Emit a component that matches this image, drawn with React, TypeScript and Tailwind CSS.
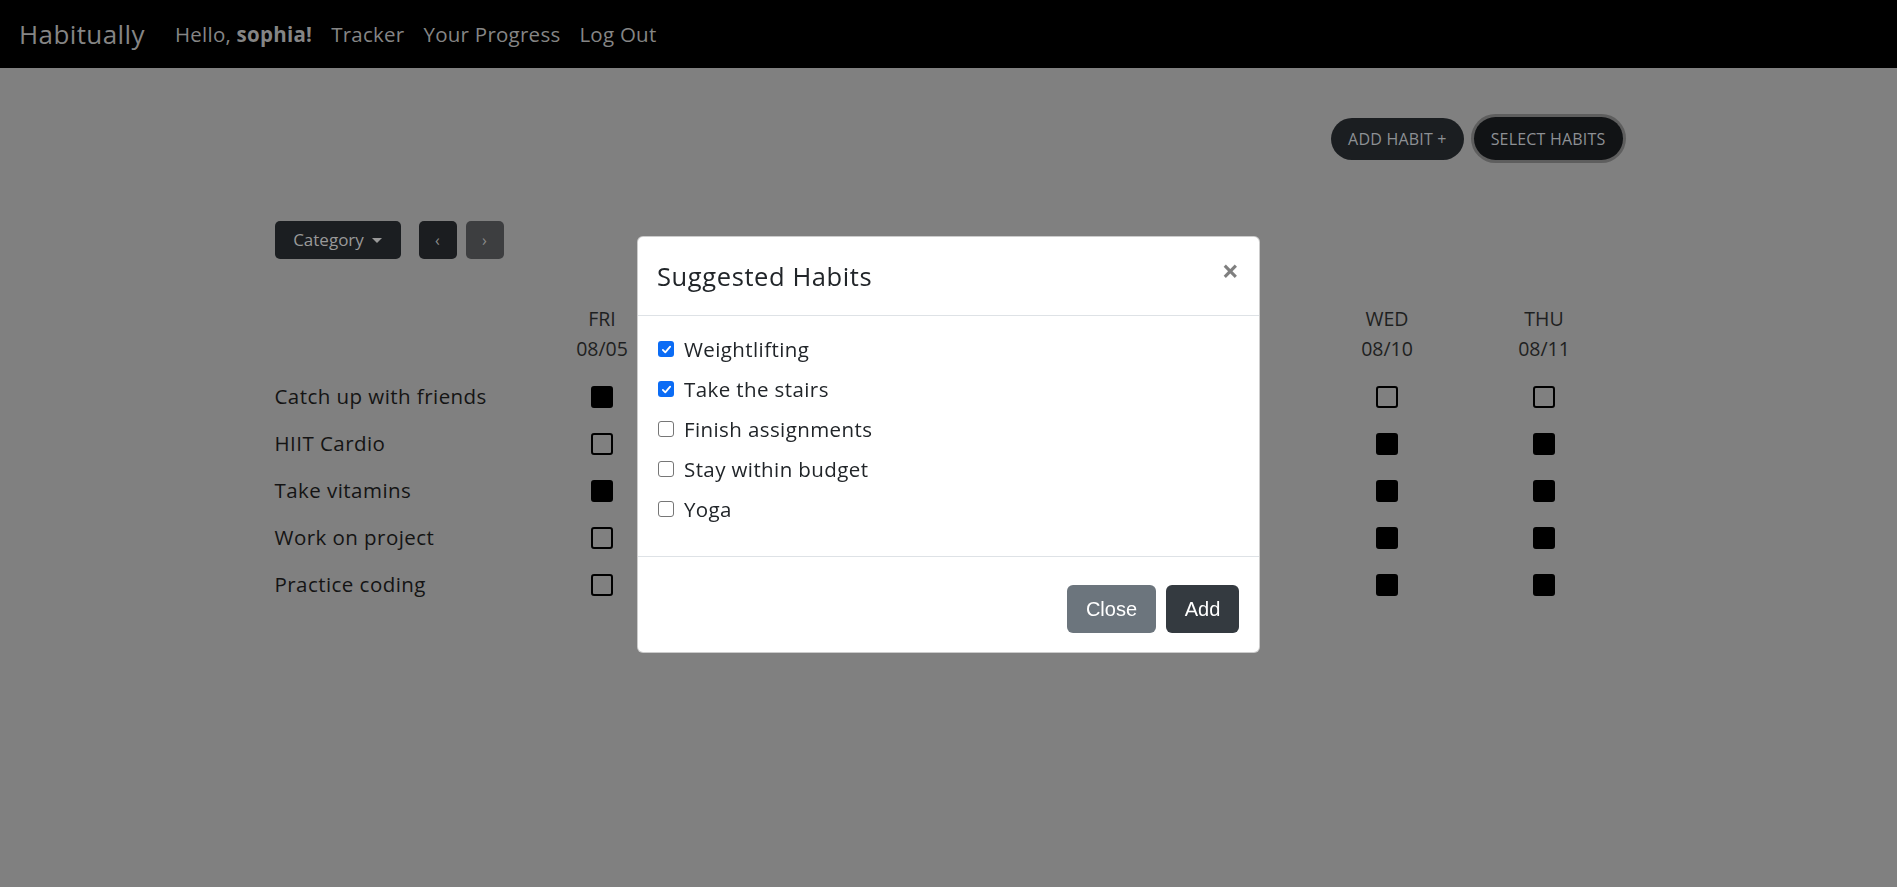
import React from "react";

const FONT = "font-['Open_Sans',sans-serif]";

const days = [
  { day: "FRI", date: "08/05" },
  { day: "SAT", date: "08/06" },
  { day: "SUN", date: "08/07" },
  { day: "MON", date: "08/08" },
  { day: "TUE", date: "08/09" },
  { day: "WED", date: "08/10" },
  { day: "THU", date: "08/11" },
];

const habits = [
  { name: "Catch up with friends", done: [1, 0, 1, 0, 1, 0, 0] },
  { name: "HIIT Cardio", done: [0, 1, 1, 0, 1, 1, 1] },
  { name: "Take vitamins", done: [1, 1, 1, 1, 1, 1, 1] },
  { name: "Work on project", done: [0, 1, 0, 1, 1, 1, 1] },
  { name: "Practice coding", done: [0, 0, 1, 1, 1, 1, 1] },
];

const suggestions = [
  { name: "Weightlifting", checked: true },
  { name: "Take the stairs", checked: true },
  { name: "Finish assignments", checked: false },
  { name: "Stay within budget", checked: false },
  { name: "Yoga", checked: false },
];

const Box = ({ filled }: { filled: boolean }) => (
  <div
    className={`size-[22px] rounded-[3px] border-2 border-black ${filled ? "bg-black" : ""}`}
  />
);

const Check = ({ checked }: { checked: boolean }) =>
  checked ? (
    <div className="size-[16px] shrink-0 rounded-[3px] bg-[#0b6cf5] flex items-center justify-center">
      <svg viewBox="0 0 16 16" className="size-[13px]" fill="none">
        <path d="M3.5 8.5l3 3 6-7" stroke="white" strokeWidth="2.2" strokeLinecap="round" strokeLinejoin="round" />
      </svg>
    </div>
  ) : (
    <div className="size-[16px] shrink-0 rounded-[3px] border border-[#767676] bg-white" />
  );

export default function App() {
  return (
    <div className={`min-h-[887px] bg-[#808080] ${FONT}`}>
      {/* navbar */}
      <nav className="h-[68px] bg-black flex items-center px-[19px] text-[#858585]">
        <span className="text-[26px] tracking-[0.4px] mr-[30px]">Habitually</span>
        <div className="flex items-center gap-[19px] text-[20.5px] tracking-[0.25px]">
          <span>
            Hello, <b className="font-bold">sophia!</b>
          </span>
          <span>Tracker</span>
          <span>Your Progress</span>
          <span>Log Out</span>
        </div>
      </nav>

      <main className="w-[1348px] mx-auto">
        <div className="flex justify-end items-center gap-[10px] pt-[49px]">
          <button className="h-[42px] px-[17px] rounded-full bg-[#1b1e21] text-[#8d9094] text-[16px] tracking-[0.2px]">
            ADD HABIT +
          </button>
          <button className="h-[43px] px-[17px] rounded-full bg-[#111315] text-[#8d9094] text-[16px] tracking-[0.2px] ring-[3px] ring-[#5e5e5e]">
            SELECT HABITS
          </button>
        </div>

        <div className="flex items-center gap-[18px] mt-[61px]">
          <button className="h-[38px] w-[126px] rounded-[5px] bg-[#1b1e21] text-[#999] text-[17px] flex items-center justify-center gap-[8px]">
            Category
            <span className="border-x-[5px] border-x-transparent border-t-[5px] border-t-[#999]" />
          </button>
          <div className="flex gap-[9px]">
            <button className="h-[38px] w-[38px] rounded-[5px] bg-[#1b1d20] text-[#8a8a8a] text-[16px]">‹</button>
            <button className="h-[38px] w-[38px] rounded-[5px] bg-[#3d3e40] text-[#8a8a8a] text-[16px]">›</button>
          </div>
        </div>

        {/* tracker table */}
        <div className="mt-[45px] grid grid-cols-[249px_repeat(7,157px)]">
          <div />
          {days.map((d) => (
            <div key={d.day} className="text-center text-[#1e1f21] text-[19.5px] leading-[30px]">
              <div>{d.day}</div>
              <div>{d.date}</div>
            </div>
          ))}
        </div>
        <div className="mt-[9px]">
          {habits.map((h) => (
            <div key={h.name} className="grid grid-cols-[249px_repeat(7,157px)] h-[47px] items-center">
              <span className="text-[20.5px] tracking-[0.45px] text-[#141414]">{h.name}</span>
              {h.done.map((v, i) => (
                <div key={i} className="flex justify-center">
                  <Box filled={v === 1} />
                </div>
              ))}
            </div>
          ))}
        </div>
      </main>

      {/* modal */}
      <div className="fixed inset-0 flex items-start justify-center pt-[236px]">
        <div className="w-[623px] h-[417px] bg-white rounded-[6px] border border-black/20 flex flex-col">
          <div className="h-[79px] shrink-0 border-b border-[#dee2e6] flex items-center justify-between pl-[19px] pr-[20px]">
            <h5 className="text-[25.5px] tracking-[0.6px] text-[#212529]">Suggested Habits</h5>
            <span className="text-[30px] font-bold text-black/50 leading-none -mt-[10px]">×</span>
          </div>
          <div className="pt-[13px] pb-[27px] px-[20px] border-b border-[#dee2e6]">
            {suggestions.map((s) => (
              <label key={s.name} className="h-[40px] flex items-center gap-[10px] text-[20.5px] tracking-[0.4px] text-[#212529]">
                <Check checked={s.checked} />
                {s.name}
              </label>
            ))}
          </div>
          <div className="flex-1 flex justify-end items-start gap-[10px] pt-[28px] pr-[20px] font-['Liberation_Sans',sans-serif]">
            <button className="h-[48px] w-[89px] rounded-[6px] bg-[#6c757d] text-white text-[20px]">Close</button>
            <button className="h-[48px] w-[73px] rounded-[6px] bg-[#343a40] text-white text-[20px]">Add</button>
          </div>
        </div>
      </div>
    </div>
  );
}
